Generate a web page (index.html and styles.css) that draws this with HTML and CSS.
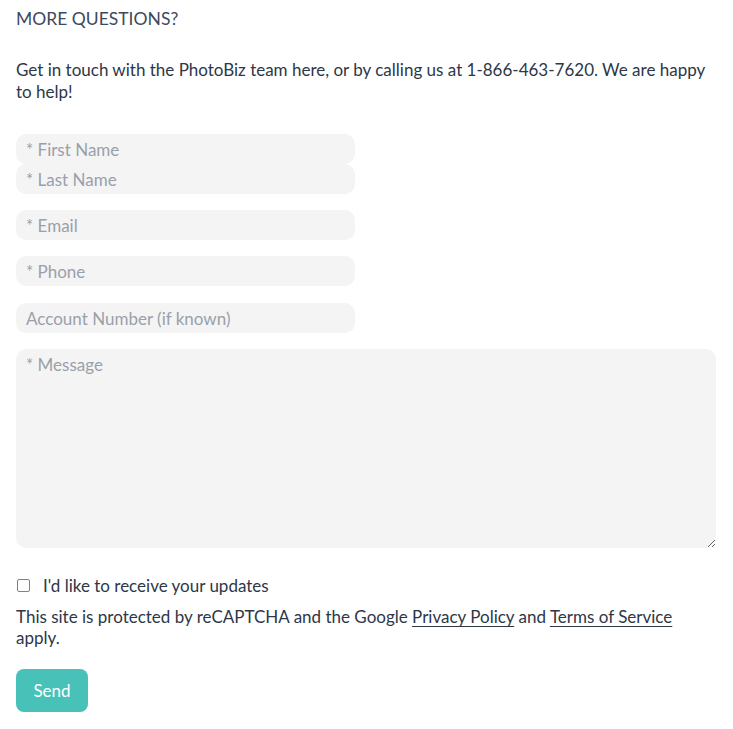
FILE: index.html
```html
<!DOCTYPE html>
<html lang="en">
<head>
<meta charset="UTF-8" />
<meta name="viewport" content="width=device-width, initial-scale=1" />
<title>More Questions</title>
<link rel="stylesheet" href="styles.css">
</head>
<body>
  <div class="contact">
    <h2 class="title">MORE QUESTIONS?</h2>
    <p class="intro">Get in touch with the PhotoBiz team here, or by calling us at 1-866-463-7620. We are happy to help!</p>

    <form class="form">
      <div class="names">
        <input type="text" class="field" placeholder="* First Name" />
        <input type="text" class="field" placeholder="* Last Name" />
      </div>
      <input type="email" class="field" placeholder="* Email" />
      <input type="tel" class="field" placeholder="* Phone" />
      <input type="text" class="field account" placeholder="Account Number (if known)" />
      <textarea class="message" placeholder="* Message"></textarea>

      <label class="updates">
        <input type="checkbox" />
        <span>I'd like to receive your updates</span>
      </label>

      <p class="legal">This site is protected by reCAPTCHA and the Google <a href="#">Privacy Policy</a> and <a href="#">Terms of Service</a> apply.</p>

      <button type="button" class="send">Send</button>
    </form>
  </div>
</body>
</html>
```

FILE: styles.css
```css
body {
  margin: 0;
  background: #fff;
  font-family: Lato, "Open Sans", sans-serif;
  color: #2d3748;
}
.contact {
  padding: 8px 16px;
  width: 700px;
}
.title {
  margin: 0;
  font-size: 17.5px;
  font-weight: 400;
  line-height: 22px;
  color: #3e4a5c;
}
.intro {
  margin: 29px 0 0;
  font-size: 17px;
  line-height: 22px;
}
.form {
  display: flex;
  flex-direction: column;
  align-items: flex-start;
  gap: 16px;
  margin-top: 31px;
}
.names {
  display: flex;
  flex-direction: column;
}
.field,
.message {
  font-family: inherit;
  font-size: 17px;
  color: #2d3748;
  background: #f4f4f4;
  border: none;
  border-radius: 10px;
  padding: 0 10px;
  box-sizing: border-box;
  outline: none;
}
.field {
  width: 339px;
  height: 30px;
}
.account {
  margin-top: 1px;
}
.message {
  width: 700px;
  height: 199px;
  padding: 5px 10px;
  resize: vertical;
}
.field::placeholder,
.message::placeholder {
  color: #9aa0aa;
}
.updates {
  display: flex;
  align-items: center;
  gap: 13px;
  margin-top: 11px;
  font-size: 17px;
  line-height: 21px;
  color: #2d3748;
}
.updates input {
  appearance: none;
  margin: 0 0 0 1px;
  width: 13px;
  height: 13px;
  border: 1.5px solid #7b8190;
  border-radius: 2px;
  background: #fff;
  box-sizing: border-box;
}
.updates input:checked {
  background: #48c1b9;
  border-color: #48c1b9;
}
.legal {
  margin: -6px 0 0;
  font-size: 17px;
  line-height: 21px;
}
.legal a {
  color: inherit;
  text-decoration-thickness: 1px;
  text-underline-offset: 3px;
}
.send {
  margin-top: 5px;
  width: 72px;
  height: 43px;
  border: none;
  border-radius: 8px;
  background: #48c1b9;
  color: #fff;
  font-family: inherit;
  font-size: 17px;
  cursor: pointer;
}
```
